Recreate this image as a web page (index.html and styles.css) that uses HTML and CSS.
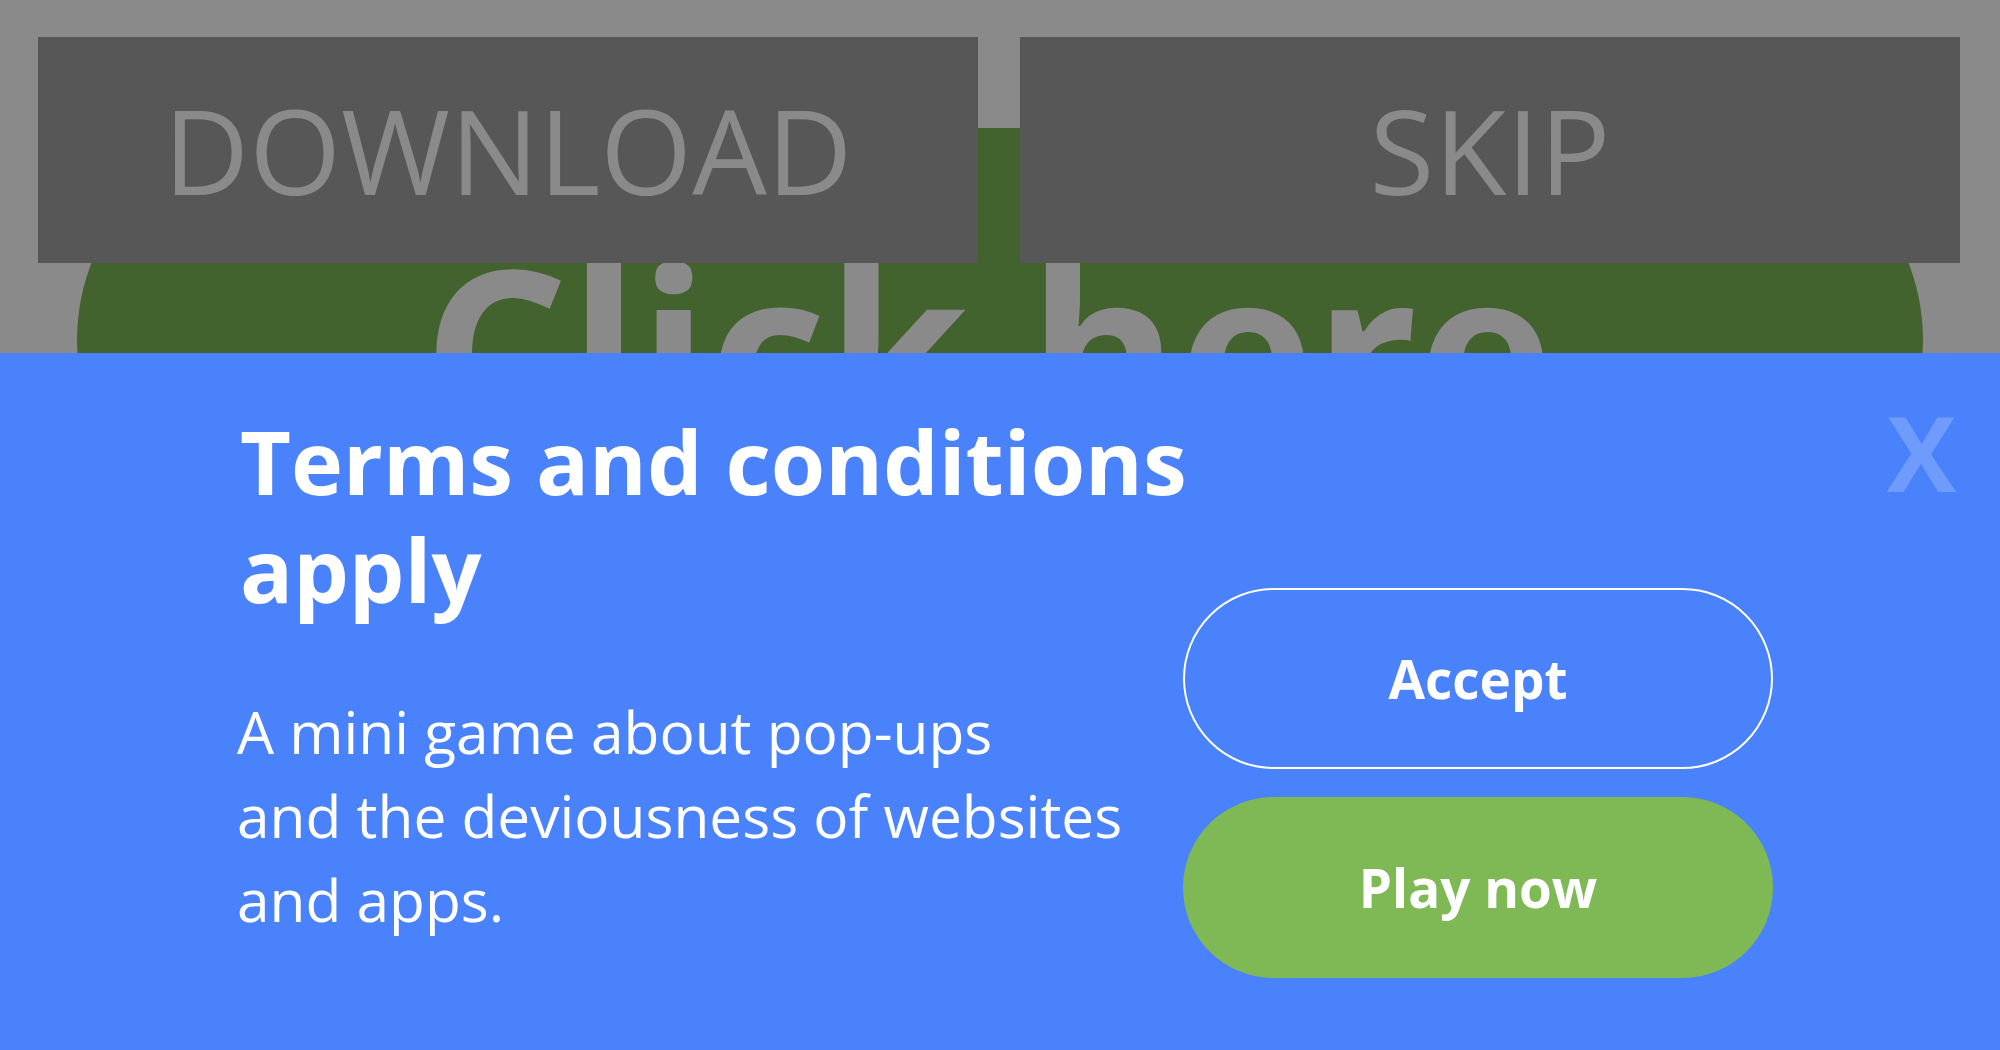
FILE: index.html
```html
<!DOCTYPE html>
<html lang="en">
<head>
    <meta charset="UTF-8">
    <meta name="viewport" content="width=device-width, initial-scale=1.0">
    <title>Terms and conditions apply</title>
<link rel="stylesheet" href="styles.css">
</head>
<body>
    <div class="screen">
        <!-- the button everyone wants to press -->
        <div class="stage">
            <button class="big-button">Click here</button>
        </div>

        <!-- fake ad buttons stacked on top of it -->
        <div class="ads">
            <button class="ad-btn">DOWNLOAD</button>
            <button class="ad-btn">SKIP</button>
        </div>

        <div class="popup">
            <button class="close-btn" title="Close">X</button>
            <div class="popup-text">
                <h1>Terms and conditions<br>apply</h1>
                <p>A mini game about pop-ups<br>and the deviousness of websites<br>and apps.</p>
            </div>
            <div class="popup-actions">
                <button class="pill pill-outline">Accept</button>
                <button class="pill pill-green">Play now</button>
            </div>
        </div>
    </div>
</body>
</html>
```

FILE: styles.css
```css
* {
  box-sizing: border-box;
}

body {
  margin: 0;
  font-family: "Open Sans", "Liberation Sans", sans-serif;
  background: #8a8a8a;
}

button {
  font-family: inherit;
  border: none;
  margin: 0;
  padding: 0;
  cursor: pointer;
}

.screen {
  position: relative;
  width: 100%;
  height: 100vh;
  overflow: hidden;
  background: #8a8a8a;
}

.stage {
  padding: 128px 77px 0 77px;
}

.big-button {
  display: flex;
  justify-content: center;
  width: 100%;
  height: 424px;
  padding: 104px 24px 0 0;
  border-radius: 212px;
  background: #43632e;
  color: #8a8a8a;
  font-size: 229px;
  font-weight: 700;
  line-height: 1;
}

/* the grey "ads" sit over the big button */
.ads {
  position: absolute;
  top: 37px;
  left: 38px;
  right: 40px;
  display: flex;
  gap: 42px;
}

.ad-btn {
  flex: 1;
  height: 226px;
  background: #575757;
  color: #8a8a8a;
  font-size: 118px;
  font-weight: 400;
  line-height: 1;
}

/* bottom sheet */
.popup {
  position: absolute;
  top: 353px;
  left: 0;
  right: 0;
  bottom: 0;
  background: #4a82fb;
  color: #fff;
  display: grid;
  grid-template-columns: minmax(0, 1fr) 590px;
  padding: 0 227px 0 240px;
}

.close-btn {
  position: absolute;
  top: 47px;
  right: 44px;
  background: none;
  color: #6f9cfc;
  font-size: 104px;
  font-weight: 700;
  line-height: 1;
}

.popup-text {
  padding-top: 54px;
  white-space: nowrap;
}

.popup-text h1 {
  margin: 0;
  font-size: 88px;
  font-weight: 700;
  line-height: 108px;
}

.popup-text p {
  margin: 66px 0 0 -3px;
  font-size: 58.6px;
  font-weight: 400;
  line-height: 84px;
}

.popup-actions {
  padding-top: 235px;
  display: flex;
  flex-direction: column;
  gap: 28px;
}

.pill {
  width: 590px;
  height: 181px;
  border-radius: 91px;
  color: #fff;
  font-size: 53px;
  font-weight: 700;
}

.pill-outline {
  background: transparent;
  border: 2px solid #fff;
}

.pill-green {
  background: #7fb956;
}
```
